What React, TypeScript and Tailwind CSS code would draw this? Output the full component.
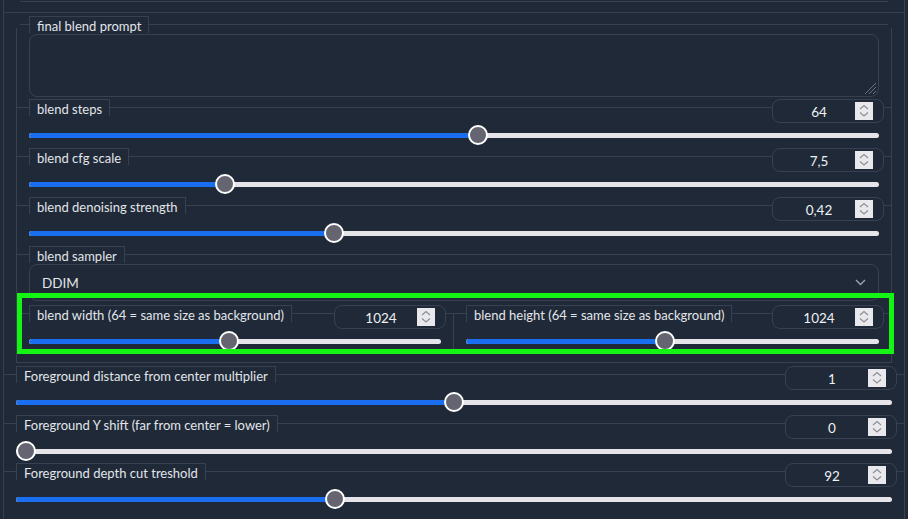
import React from "react";

const FONT = { fontFamily: "Lato, 'Noto Sans', sans-serif" };

function Chip({ label }: { label: string }) {
  return (
    <div className="h-[17px] shrink-0 whitespace-nowrap border border-b-0 border-[#374151] bg-[#1f2937] px-[7px] pt-[1px] text-[13px] leading-[16px] text-[#e2e5ea]">
      {label}
    </div>
  );
}

function Spinner() {
  return (
    <svg width="18" height="18" viewBox="0 0 18 18" className="shrink-0">
      <rect width="18" height="18" fill="#e9e9ed" />
      <path d="M5 7 L9 3.5 L13 7" fill="none" stroke="#8e8e99" strokeWidth="1.2" />
      <path d="M5 10.5 L9 14 L13 10.5" fill="none" stroke="#8e8e99" strokeWidth="1.2" />
    </svg>
  );
}

function NumBox({ value }: { value: string }) {
  return (
    <div className="flex h-[24px] w-[112px] shrink-0 items-center rounded-lg border border-[#374151] pl-[10px] pr-[10px]">
      <span className="flex-1 pt-[1px] text-center text-[13.5px] leading-[16px] text-[#eef0f3]">{value}</span>
      <Spinner />
    </div>
  );
}

function Line({ w }: { w?: string }) {
  return <div className={`mt-[8px] h-px bg-[#374151] ${w ?? "flex-1"}`} />;
}

function Track({ p }: { p: number }) {
  return (
    <div className="mt-[2px] px-[12px]">
      <div className="relative flex h-[20px] items-center">
        <div className="h-[5px] w-full overflow-hidden rounded-full bg-[#e4e4e9]">
          <div
            className="h-full rounded-full bg-[#1a6ff0]"
            style={{ width: `calc(10px + ${p} * (100% - 20px))` }}
          />
        </div>
        <div
          className="absolute top-0 h-[20px] w-[20px] rounded-full border-2 border-white bg-[#656571]"
          style={{ left: `calc(${p} * (100% - 20px))` }}
        />
      </div>
    </div>
  );
}

function SliderBlock({
  label,
  value,
  p,
  h = "h-[49px]",
}: {
  label: string;
  value: string;
  p: number;
  h?: string;
}) {
  return (
    <div className={`flex flex-col ${h}`}>
      <div className="flex h-[24px] items-start">
        <Line w="w-[12px]" />
        <Chip label={label} />
        <Line />
        <NumBox value={value} />
        <Line w="w-[7px]" />
      </div>
      <Track p={p} />
    </div>
  );
}

export default function App() {
  return (
    <div className="h-[519px] w-[908px] overflow-hidden bg-[#1f2937] pl-[3px]" style={FONT}>
      <div className="flex h-full w-[902px] flex-col border-x border-[#374151]">
        <div className="ml-[16px] mt-[1px] h-px w-[868px] bg-[#374151]" />
        <div className="mt-[10px] h-px w-full bg-[#374151]" />

        {/* inner group */}
        <div className="mx-[12px] mt-[15px] flex flex-col border-x border-b border-[#374151] pb-[8px]">
          {/* final blend prompt */}
          <div className="mx-[3px] -mt-[12px] flex flex-col">
            <div className="flex h-[17px] items-start">
              <Line w="w-[9px]" />
              <Chip label="final blend prompt" />
              <Line />
            </div>
            <div className="relative mx-[9px] mt-[1px] h-[63px] rounded-lg border border-[#374151]">
              <svg
                width="14"
                height="14"
                viewBox="0 0 14 14"
                className="absolute bottom-[1px] right-[1px]"
              >
                <path d="M2 13 L13 2 M6 13 L13 6 M10 13 L13 10" stroke="#6b7280" strokeWidth="1" />
              </svg>
            </div>
          </div>

          <div className="mt-[2px]">
            <SliderBlock label="blend steps" value="64" p={0.529} />
          </div>
          <SliderBlock label="blend cfg scale" value="7,5" p={0.224} />
          <SliderBlock label="blend denoising strength" value="0,42" p={0.355} />

          {/* blend sampler */}
          <div className="flex flex-col">
            <div className="flex h-[17px] items-start">
              <Line w="w-[12px]" />
              <Chip label="blend sampler" />
              <Line />
            </div>
            <div className="mx-[12px] mt-[1px] flex h-[37px] items-center justify-between rounded-lg border border-[#374151] pl-[12px] pr-[12px]">
              <span className="pt-[1px] text-[13.5px] text-[#e2e5ea]">DDIM</span>
              <svg width="11" height="7" viewBox="0 0 11 7">
                <path d="M1 1 L5.5 5.5 L10 1" fill="none" stroke="#9ca3af" strokeWidth="1.4" />
              </svg>
            </div>
          </div>

          {/* width / height row */}
          <div className="relative mt-[4px] flex h-[49px]">
            <div className="flex w-[436px] flex-col">
              <div className="flex h-[24px] items-start">
                <Line w="w-[12px]" />
                <Chip label="blend width (64 = same size as background)" />
                <Line />
                <NumBox value="1024" />
                <Line w="w-[7px]" />
              </div>
              <Track p={0.485} />
            </div>
            <div className="mt-[8px] h-[38px] w-px bg-[#374151]" />
            <div className="flex flex-1 flex-col">
              <div className="flex h-[24px] items-start">
                <Line w="w-[12px]" />
                <Chip label="blend height (64 = same size as background)" />
                <Line />
                <NumBox value="1024" />
                <Line w="w-[7px]" />
              </div>
              <Track p={0.481} />
            </div>
            <div className="pointer-events-none absolute left-0 top-[-12px] h-[61px] w-[877px] border-[5px] border-[#14f514]" />
          </div>
        </div>

        <div className="mt-[3px]">
          <SliderBlock label="Foreground distance from center multiplier" value="1" p={0.5} />
        </div>
        <SliderBlock label="Foreground Y shift (far from center = lower)" value="0" p={0} h="h-[48px]" />
        <SliderBlock label="Foreground depth cut treshold" value="92" p={0.361} />
      </div>
    </div>
  );
}
